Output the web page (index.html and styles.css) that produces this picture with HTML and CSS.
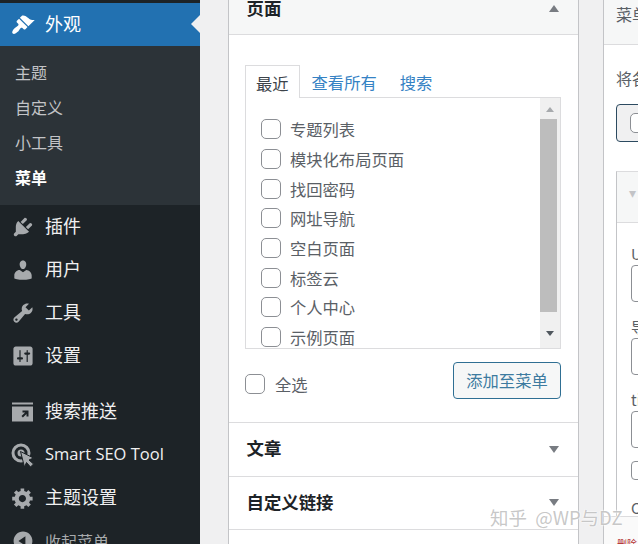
FILE: index.html
```html
<!DOCTYPE html>
<html>
<head>
    <title>菜单</title>
    <link rel="stylesheet" href="styles.css">
</head>
<body>
    <div class="sidebar">
        <div class="menu-item current">
            <svg class="icon" viewBox="0 0 20 20"><path d="M14.48 11.06L7.41 3.99l1.5-1.5c.5-.56 2.3-.47 3.51.32 1.21.8 1.43 1.28 2.91 2.1 1.18.64 2.45 1.26 4.45.85zm-.71.71L6.7 4.7 4.93 6.47c-.39.39-.39 1.02 0 1.41l1.06 1.06c.39.39.39 1.03 0 1.42-.6.6-1.43 1.11-2.21 1.69-.35.26-.7.53-1.01.84C1.43 14.23.4 16.08 1.4 17.07c.99 1 2.84-.03 4.18-1.36.31-.31.58-.66.85-1.02.57-.78 1.08-1.61 1.69-2.21.39-.39 1.02-.39 1.41 0l1.06 1.06c.39.39 1.02.39 1.41 0z"/></svg>
            <span>外观</span>
        </div>
        <div class="submenu">
            <div class="sub-item">主题</div>
            <div class="sub-item">自定义</div>
            <div class="sub-item">小工具</div>
            <div class="sub-item active">菜单</div>
        </div>
        <div class="menu-item">
            <svg class="icon" viewBox="0 0 20 20"><path d="M13.11 4.36L9.87 7.6 8 5.73l3.24-3.24c.35-.34 1.05-.2 1.56.32.52.51.66 1.21.31 1.55zm-8 1.77l.91-1.12 9.01 9.01-1.19.84c-.71.71-2.63 1.16-3.82 1.16H6.14L4.9 17.26c-.59.59-1.54.59-2.12 0-.59-.58-.59-1.53 0-2.12l1.24-1.24v-3.88c0-1.13.4-3.19 1.09-3.89zm7.26 3.97l3.24-3.24c.34-.35 1.04-.21 1.55.31.52.51.66 1.21.31 1.55l-3.24 3.25z"/></svg>
            <span>插件</span>
        </div>
        <div class="menu-item">
            <svg class="icon" viewBox="0 0 20 20"><path d="M10 9.25c-2.27 0-2.73-3.44-2.73-3.44C7 4.02 7.82 2 9.97 2c2.16 0 2.98 2.02 2.71 3.81 0 0-.41 3.44-2.68 3.44zm0 2.57L12.72 10c2.39 0 4.52 2.33 4.52 4.53v2.49s-3.65 1.13-7.24 1.13c-3.65 0-7.24-1.13-7.24-1.13v-2.49c0-2.25 1.94-4.48 4.47-4.48z"/></svg>
            <span>用户</span>
        </div>
        <div class="menu-item">
            <svg class="icon" viewBox="0 0 20 20"><path d="M16.68 9.77c-1.34 1.34-3.3 1.67-4.95.99l-5.41 6.52c-.99.99-2.59.99-3.58 0s-.99-2.59 0-3.57l6.52-5.42c-.68-1.65-.35-3.61.99-4.95 1.28-1.28 3.12-1.62 4.72-1.06l-2.89 2.89 2.82 2.82 2.86-2.87c.53 1.58.18 3.39-1.08 4.65zM3.81 16.21c.4.39 1.04.39 1.43 0 .4-.4.4-1.04 0-1.43-.39-.4-1.03-.4-1.43 0-.39.39-.39 1.03 0 1.43z"/></svg>
            <span>工具</span>
        </div>
        <div class="menu-item">
            <svg class="icon" viewBox="0 0 20 20"><path d="M18 16V4c0-1.1-.9-2-2-2H4c-1.1 0-2 .9-2 2v12c0 1.1.9 2 2 2h12c1.1 0 2-.9 2-2zM8 11h1c.55 0 1 .45 1 1s-.45 1-1 1H8v1.5c0 .28-.22.5-.5.5s-.5-.22-.5-.5V13H6c-.55 0-1-.45-1-1s.45-1 1-1h1V5.5c0-.28.22-.5.5-.5s.5.22.5.5V11zm5-2h-1c-.55 0-1-.45-1-1s.45-1 1-1h1V5.5c0-.28.22-.5.5-.5s.5.22.5.5V7h1c.55 0 1 .45 1 1s-.45 1-1 1h-1v5.5c0 .28-.22.5-.5.5s-.5-.22-.5-.5V9z"/></svg>
            <span>设置</span>
        </div>
        <div class="menu-gap"></div>
        <div class="menu-item">
            <svg class="icon" viewBox="0 0 24 24"><path fill-rule="evenodd" d="M1 2.5h21v2H1zM1 6.5h21v15H1zM11.5 10.5h6v6h-2v-2.6l-3.6 3.6-1.4-1.4 3.6-3.6h-2.6z"/></svg>
            <span>搜索推送</span>
        </div>
        <div class="menu-item">
            <svg class="icon" viewBox="0 0 24 24">
                <circle class="ring" cx="10" cy="10" r="8"/>
                <circle cx="10" cy="10" r="3.5"/>
                <path class="cursor" d="M9.5 8.5l13 6.5-4.5 2 4.5 4-3 3-4-4.500-2 4.500z"/>
            </svg>
            <span class="latin">Smart SEO Tool</span>
        </div>
        <div class="menu-item">
            <svg class="icon" viewBox="0 0 20 20"><path d="M18 12h-2.18c-.17.7-.44 1.35-.81 1.93l1.54 1.54-2.1 2.1-1.54-1.54c-.58.36-1.23.63-1.91.79V19H8v-2.18c-.68-.16-1.33-.43-1.91-.79l-1.54 1.54-2.12-2.12 1.54-1.54c-.36-.58-.63-1.23-.79-1.91H1V9.03h2.17c.16-.7.44-1.35.8-1.94L2.43 5.55l2.1-2.1 1.54 1.54c.58-.37 1.24-.64 1.93-.81V2h3v2.18c.68.16 1.33.43 1.91.79l1.54-1.54 2.12 2.12-1.54 1.54c.36.59.64 1.24.8 1.94H18V12zm-8.5 1.5c1.66 0 3-1.34 3-3s-1.34-3-3-3-3 1.34-3 3 1.34 3 3 3z"/></svg>
            <span>主题设置</span>
        </div>
        <div class="menu-item collapse">
            <svg class="icon" viewBox="0 0 20 20"><path d="M10 2.16c4.33 0 7.84 3.51 7.84 7.84s-3.51 7.84-7.84 7.84S2.16 14.33 2.16 10 5.71 2.16 10 2.16zm2 11.72V6.12L6.18 9.97z"/></svg>
            <span>收起菜单</span>
        </div>
    </div>

    <div class="main">
        <div class="column">
            <div class="panel">
                <div class="panel-head open">
                    <h3>页面</h3>
                    <i class="arrow up"></i>
                </div>
                <div class="panel-body">
                    <div class="tabs">
                        <div class="tab selected">最近</div>
                        <div class="tab">查看所有</div>
                        <div class="tab">搜索</div>
                    </div>
                    <div class="list-box">
                        <div class="list">
                            <label class="row"><i class="check"></i>专题列表</label>
                            <label class="row"><i class="check"></i>模块化布局页面</label>
                            <label class="row"><i class="check"></i>找回密码</label>
                            <label class="row"><i class="check"></i>网址导航</label>
                            <label class="row"><i class="check"></i>空白页面</label>
                            <label class="row"><i class="check"></i>标签云</label>
                            <label class="row"><i class="check"></i>个人中心</label>
                            <label class="row"><i class="check"></i>示例页面</label>
                        </div>
                        <div class="scrollbar">
                            <i class="arrow up small"></i>
                            <div class="thumb"></div>
                            <i class="arrow down small"></i>
                        </div>
                    </div>
                    <div class="actions">
                        <label class="row select-all"><i class="check"></i>全选</label>
                        <div class="button">添加至菜单</div>
                    </div>
                </div>
                <div class="panel-head">
                    <h3>文章</h3>
                    <i class="arrow down"></i>
                </div>
                <div class="panel-head">
                    <h3>自定义链接</h3>
                    <i class="arrow down"></i>
                </div>
            </div>
        </div>

        <div class="editor">
            <div class="editor-head">菜单名称</div>
            <div class="editor-body">
                <p class="hint">将各项拖放到</p>
                <div class="outline-btn"><i class="check"></i></div>
                <div class="item-box">
                    <div class="item-head"><span>▾</span></div>
                    <div class="item-body">
                        <div class="field-label">URL</div>
                        <div class="input"></div>
                        <div class="field-label">导航标签</div>
                        <div class="input"></div>
                        <div class="field-label">title</div>
                        <div class="input"></div>
                        <div class="mini-input"></div>
                        <div class="field-label last">CSS</div>
                    </div>
                </div>
                <div class="editor-foot">删除</div>
            </div>
        </div>
    </div>

    <div class="watermark">知乎 @WP与DZ</div>
</body>
</html>
```

FILE: styles.css
```css
body {
    margin: 0;
    width: 638px;
    height: 544px;
    overflow: hidden;
    display: flex;
    background: #f0f0f1;
    font-family: "Noto Sans CJK SC", "Open Sans", sans-serif;
    color: #5a6066;
}
.sidebar {
    width: 200px;
    height: 544px;
    padding-top: 3px;
    box-sizing: border-box;
    flex-shrink: 0;
    overflow: hidden;
    background: #1d2327;
    color: #f0f0f1;
}
.menu-item {
    height: 43px;
    display: flex;
    align-items: center;
    gap: 10px;
    padding-left: 11px;
    font-size: 18px;
    position: relative;
}
.menu-item span {
    padding-bottom: 4px;
}
.icon {
    width: 24px;
    height: 24px;
    fill: #a7aaad;
    flex-shrink: 0;
}
.ring {
    fill: none;
    stroke: #a7aaad;
    stroke-width: 3;
}
.cursor {
    stroke: #1d2327;
    stroke-width: 1;
}
.menu-item .latin {
    font-family: "Open Sans", sans-serif;
    font-size: 16.5px;
    padding-bottom: 2px;
}
.current {
    background: #2271b1;
    color: #fff;
}
.current .icon {
    fill: #fff;
}
.current::after {
    content: "";
    position: absolute;
    right: 0;
    top: 12px;
    border: 9px solid transparent;
    border-right-color: #f0f0f1;
    border-left-width: 0;
}
.submenu {
    background: #2c3338;
    padding: 10px 0 9px;
}
.sub-item {
    height: 35px;
    line-height: 33px;
    padding-left: 15px;
    font-size: 16px;
    color: #c3c4c7;
}
.sub-item.active {
    color: #fff;
    font-weight: 700;
}
.menu-gap {
    height: 13px;
}
.collapse {
    font-size: 16px;
    color: #a7aaad;
}
.menu-item.collapse span {
    padding-bottom: 0;
}
.main {
    flex: 1;
    display: flex;
    gap: 24px;
    padding-left: 28px;
    min-width: 0;
}
.column {
    width: 351px;
    flex-shrink: 0;
}
.panel {
    background: #fff;
    border-left: 1px solid #c3c4c7;
    border-right: 1px solid #c3c4c7;
    box-sizing: border-box;
    height: 544px;
}
.panel-head {
    height: 52.6px;
    display: flex;
    align-items: center;
    justify-content: space-between;
    padding: 0 19px 0 17.5px;
    border-bottom: 1px solid #dcdcde;
}
.panel-head.open {
    height: 34px;
    align-items: flex-end;
    background: #f6f7f7;
}
.panel-head h3 {
    margin: 0 0 3px;
    font-size: 17.4px;
    font-weight: 700;
    color: #1d2327;
}
.panel-head.open h3 {
    line-height: 20px;
    margin-bottom: 16px;
}
.panel-head.open .arrow {
    margin-bottom: 22px;
}
.arrow {
    width: 0;
    height: 0;
    border-left: 5px solid transparent;
    border-right: 5px solid transparent;
    display: block;
}
.arrow.up {
    border-bottom: 7px solid #787c82;
}
.arrow.down {
    border-top: 7px solid #787c82;
}
.arrow.small {
    border-left-width: 4px;
    border-right-width: 4px;
    margin: 0 auto;
}
.arrow.up.small {
    border-bottom: 5px solid #a7aaad;
}
.arrow.down.small {
    border-top: 5px solid #50575e;
}
.panel-body {
    padding: 30px 17px 0 16px;
    height: 388px;
    box-sizing: border-box;
    border-bottom: 1px solid #dcdcde;
}
.tabs {
    display: flex;
    height: 32px;
    font-size: 16.3px;
    color: #3582c4;
}
.tab {
    line-height: 34px;
    padding: 0 11px;
    margin-right: 1px;
}
.tab.selected {
    color: #3c434a;
    background: #fff;
    border: 1px solid #dcdcde;
    border-bottom: 0;
    height: 33px;
    position: relative;
    z-index: 1;
    padding: 0 10px;
    box-sizing: border-box;
    line-height: 34px;
}
.list-box {
    height: 252px;
    box-sizing: border-box;
    border: 1px solid #dcdcde;
    display: flex;
    overflow: hidden;
}
.list {
    flex: 1;
    padding: 16.5px 0 0 15px;
    overflow: hidden;
}
.row {
    display: flex;
    align-items: center;
    gap: 9px;
    height: 29.7px;
    font-size: 16.3px;
    color: #5a6066;
}
.check {
    width: 20px;
    height: 20px;
    box-sizing: border-box;
    border: 1px solid #8c8f94;
    border-radius: 5px;
    background: #fff;
    flex-shrink: 0;
}
.scrollbar {
    width: 20px;
    background: #f0f0f0;
    padding-top: 9px;
    position: relative;
}
.thumb {
    width: 17px;
    height: 193px;
    margin-top: 7px;
    background: #bdbdbd;
}
.scrollbar .down {
    margin-top: 19px;
}
.actions {
    display: flex;
    justify-content: space-between;
    align-items: flex-start;
    padding-top: 13px;
}
.select-all {
    gap: 10px;
    margin-top: 7px;
}
.button {
    width: 108px;
    height: 37px;
    box-sizing: border-box;
    border: 1px solid #2f6f93;
    border-radius: 4px;
    background: #f6f7f7;
    color: #3d7ba0;
    font-size: 16.3px;
    line-height: 35px;
    text-align: center;
}
.editor {
    flex: 1;
    min-width: 0;
    background: #fff;
    border-left: 1px solid #c3c4c7;
    overflow: hidden;
    white-space: nowrap;
}
.editor-head {
    height: 45px;
    box-sizing: border-box;
    background: #f6f7f7;
    border-bottom: 1px solid #dcdcde;
    padding-left: 12px;
    font-size: 16px;
    line-height: 28px;
}
.editor-body {
    padding: 0 0 0 12px;
}
.hint {
    margin: 0;
    height: 59px;
    line-height: 66px;
    font-size: 16px;
}
.outline-btn {
    width: 60px;
    height: 38px;
    box-sizing: border-box;
    border: 1px solid #2c4a60;
    border-radius: 4px;
    background: #f0f0f1;
    display: flex;
    align-items: center;
    padding-left: 13px;
}
.item-box {
    margin-top: 29px;
    width: 60px;
    height: 345px;
    box-sizing: border-box;
    border: 1px solid #dcdcde;
    border-left-color: #c3c4c7;
    border-bottom: 0;
}
.item-head {
    height: 51px;
    box-sizing: border-box;
    background: #f6f7f7;
    border-bottom: 1px solid #dcdcde;
    padding-left: 12px;
    line-height: 40px;
    font-size: 14px;
    color: #c3c4c7;
}
.item-body {
    padding: 21px 0 0 14px;
}
.field-label {
    height: 20px;
    line-height: 20px;
    font-size: 15px;
}
.input {
    width: 50px;
    height: 37px;
    box-sizing: border-box;
    border: 1px solid #8c8f94;
    border-radius: 4px;
    margin: 1px 0 15px;
    background: #fff;
}
.mini-input {
    width: 30px;
    height: 19px;
    margin-top: -2px;
    box-sizing: border-box;
    border: 1px solid #8c8f94;
    border-radius: 4px;
}
.field-label.last {
    margin-top: 18px;
}
.editor-foot {
    position: absolute;
    left: 604px;
    top: 516px;
    width: 34px;
    height: 28px;
    background: #fafafa;
    border-top: 1px solid #dcdcde;
    padding-left: 13px;
    box-sizing: border-box;
    font-size: 10px;
    line-height: 54px;
    color: #b32d2e;
    overflow: hidden;
}
.watermark {
    position: absolute;
    left: 490px;
    top: 505px;
    font-size: 18.5px;
    line-height: 24px;
    word-spacing: 4px;
    color: rgba(175, 175, 175, 0.7);
    text-shadow: 0 0 2px #fff, 0 0 2px #fff;
    white-space: nowrap;
}
```
